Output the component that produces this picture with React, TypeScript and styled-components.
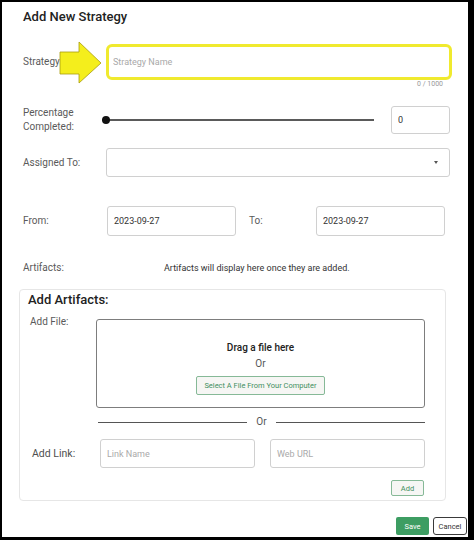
import React from "react";
import styled, { createGlobalStyle } from "styled-components";

const GlobalStyle = createGlobalStyle`
  html, body {
    margin: 0;
    padding: 0;
    background: #000;
  }
  * {
    box-sizing: border-box;
  }
  body {
    font-family: Roboto, "Liberation Sans", Arial, sans-serif;
  }
`;

const Frame = styled.div`
  width: 474px;
  height: 540px;
  padding: 2px 6px 3px 2px;
  background: #000;
`;

const Panel = styled.div`
  height: 100%;
  background: #fff;
  padding: 7px 18px 3px 21px;
  display: flex;
  flex-direction: column;
`;

const Title = styled.h2`
  margin: 0;
  font-size: 13px;
  line-height: 16px;
  font-weight: 500;
  color: #222;
`;

const Row = styled.div<{ $top: number; $cols?: string }>`
  display: grid;
  grid-template-columns: ${(p) => p.$cols || "83px 1fr"};
  align-items: center;
  margin-top: ${(p) => p.$top}px;
`;

const Label = styled.label`
  font-size: 10px;
  line-height: 14px;
  color: #5a5a5a;
`;

const StrategyField = styled.div`
  position: relative;
  margin-right: -2px;
`;

const Arrow = styled.svg`
  position: absolute;
  left: -47px;
  top: -3px;
`;

const StrategyInput = styled.input`
  width: 100%;
  height: 36px;
  border: 3px solid #f0ea2e;
  border-radius: 6px;
  padding: 0 4px;
  font-family: inherit;
  font-size: 9px;
  color: #333;
  outline: none;
  &::placeholder {
    color: #a9a9a9;
  }
`;

const Counter = styled.div`
  text-align: right;
  font-size: 7px;
  line-height: 8px;
  color: #999;
  margin: 0 7px 0 0;
`;

const Slider = styled.input`
  -webkit-appearance: none;
  appearance: none;
  width: calc(100% - 13px);
  margin: 0 17px 0 -4px;
  height: 10px;
  background: transparent;
  &::-webkit-slider-runnable-track {
    height: 2px;
    background: #5a5a5a;
  }
  &::-webkit-slider-thumb {
    -webkit-appearance: none;
    width: 8px;
    height: 8px;
    border-radius: 50%;
    background: #111;
    margin-top: -3px;
  }
`;

const Box = styled.input<{ $h: number }>`
  width: 100%;
  height: ${(p) => p.$h}px;
  border: 1px solid #d0d0d0;
  border-radius: 3px;
  padding: 0 6px;
  font-family: inherit;
  font-size: 9px;
  color: #333;
  outline: none;
  background: #fff;
  &::placeholder {
    color: #aaa;
  }
`;

const SelectBox = styled.div`
  height: 29px;
  border: 1px solid #d0d0d0;
  border-radius: 3px;
  display: flex;
  align-items: center;
  justify-content: flex-end;
  padding-right: 11px;
`;

const Caret = styled.span`
  width: 0;
  height: 0;
  border-left: 2.5px solid transparent;
  border-right: 2.5px solid transparent;
  border-top: 3px solid #555;
`;

const ToLabel = styled(Label)`
  padding-left: 13px;
`;

const Message = styled.div`
  font-size: 9px;
  line-height: 14px;
  color: #333;
  padding-left: 58px;
`;

const Card = styled.section`
  margin: 14px 4px 0 -4px;
  border: 1px solid #e6e6e6;
  border-radius: 4px;
  padding: 2px 20px 4px 8px;
`;

const CardTitle = styled.h3`
  margin: 0;
  font-size: 13px;
  line-height: 16px;
  font-weight: 500;
  color: #222;
`;

const FileRow = styled.div`
  display: grid;
  grid-template-columns: 68px 1fr;
  align-items: start;
  margin-top: 11px;
`;

const FileLabel = styled(Label)`
  margin: -4px 0 0 2px;
`;

const DropZone = styled.div`
  height: 89px;
  border: 1px solid #7d7d7d;
  border-radius: 3px;
  display: flex;
  flex-direction: column;
  align-items: center;
  padding-top: 21px;
`;

const DropText = styled.div`
  font-size: 10px;
  line-height: 14px;
  font-weight: 500;
  color: #222;
`;

const OrText = styled.div`
  font-size: 10px;
  line-height: 14px;
  color: #555;
  margin-top: 2px;
`;

const GreenOutline = styled.button<{ $w: number; $h: number; $top?: number }>`
  width: ${(p) => p.$w}px;
  height: ${(p) => p.$h}px;
  margin-top: ${(p) => p.$top || 0}px;
  border: 1px solid #86b997;
  border-radius: 2px;
  background: #f6f6f4;
  color: #3f8f5e;
  font-family: inherit;
  font-size: 7.5px;
  padding: 0;
  cursor: pointer;
`;

const Divider = styled.div`
  display: flex;
  align-items: center;
  gap: 9px;
  margin: 7px 0 0 70px;
  font-size: 10px;
  line-height: 14px;
  color: #555;
  &::before,
  &::after {
    content: "";
    flex: 1;
    height: 1px;
    background: #555;
  }
`;

const LinkRow = styled.div`
  display: grid;
  grid-template-columns: 57px 1fr 1fr;
  column-gap: 15px;
  align-items: center;
  margin-top: 10px;
`;

const LinkLabel = styled(Label)`
  font-size: 10.5px;
  margin-left: 4px;
  color: #4f4f4f;
`;

const CardActions = styled.div`
  display: flex;
  justify-content: flex-end;
  margin: 12px 1px 0 0;
`;

const Footer = styled.div`
  display: flex;
  justify-content: flex-end;
  gap: 4px;
  margin: 16px -17px 0 0;
`;

const SaveButton = styled.button`
  width: 33px;
  height: 18px;
  border: none;
  border-radius: 2px;
  background: #3d9d62;
  color: #fff;
  font-family: inherit;
  font-size: 7.5px;
  padding: 0;
`;

const CancelButton = styled.button`
  width: 34px;
  height: 18px;
  border: 1px solid #3a3a3a;
  border-radius: 3px;
  background: #fff;
  color: #333;
  font-family: inherit;
  font-size: 7.5px;
  padding: 0;
`;

export default function App() {
  return (
    <>
      <GlobalStyle />
      <Frame>
        <Panel>
          <Title>Add New Strategy</Title>

          <Row $top={19}>
            <Label>Strategy</Label>
            <StrategyField>
              <Arrow width="44" height="44" viewBox="0 0 44 44">
                <polygon
                  points="1,11 20,11 20,1 42,22 20,42 20,33 1,33"
                  fill="#f4ee1c"
                  stroke="#a89c10"
                  strokeWidth="0.8"
                />
              </Arrow>
              <StrategyInput placeholder="Strategy Name" />
            </StrategyField>
          </Row>
          <Counter>0 / 1000</Counter>

          <Row $top={18} $cols="83px 1fr 59px">
            <Label>
              Percentage
              <br />
              Completed:
            </Label>
            <Slider type="range" min={0} max={100} defaultValue={0} />
            <Box $h={28} defaultValue="0" />
          </Row>

          <Row $top={14}>
            <Label>Assigned To:</Label>
            <SelectBox>
              <Caret />
            </SelectBox>
          </Row>

          <Row $top={29} $cols="84px 129px 80px 129px">
            <Label>From:</Label>
            <Box $h={30} defaultValue="2023-09-27" />
            <ToLabel>To:</ToLabel>
            <Box $h={30} defaultValue="2023-09-27" />
          </Row>

          <Row $top={25}>
            <Label>Artifacts:</Label>
            <Message>Artifacts will display here once they are added.</Message>
          </Row>

          <Card>
            <CardTitle>Add Artifacts:</CardTitle>
            <FileRow>
              <FileLabel>Add File:</FileLabel>
              <DropZone>
                <DropText>Drag a file here</DropText>
                <OrText>Or</OrText>
                <GreenOutline $w={129} $h={19} $top={5}>
                  Select A File From Your Computer
                </GreenOutline>
              </DropZone>
            </FileRow>
            <Divider>Or</Divider>
            <LinkRow>
              <LinkLabel>Add Link:</LinkLabel>
              <Box $h={29} placeholder="Link Name" />
              <Box $h={29} placeholder="Web URL" />
            </LinkRow>
            <CardActions>
              <GreenOutline $w={33} $h={16}>
                Add
              </GreenOutline>
            </CardActions>
          </Card>

          <Footer>
            <SaveButton>Save</SaveButton>
            <CancelButton>Cancel</CancelButton>
          </Footer>
        </Panel>
      </Frame>
    </>
  );
}
